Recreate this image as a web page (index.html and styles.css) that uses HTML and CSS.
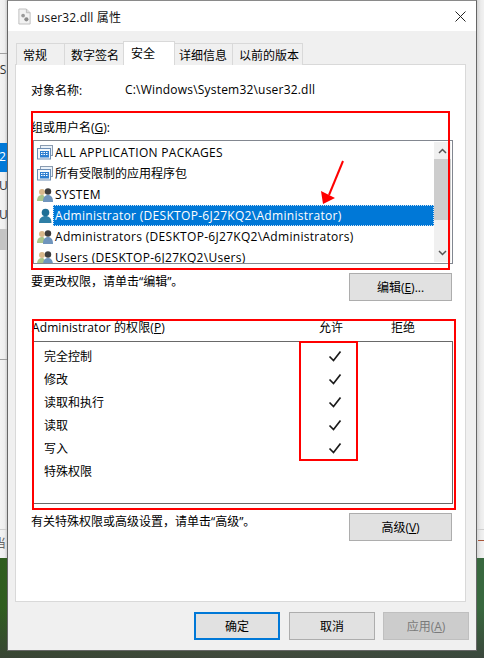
FILE: index.html
```html
<!DOCTYPE html>
<html lang="zh-CN">
<head>
<meta charset="utf-8">
<title>user32.dll 属性</title>
<link rel="stylesheet" href="styles.css">
</head>
<body>
<div class="desktop">
  <div class="behind-left">
    <span class="peek p1">ES</span><span class="peek p2 sel">2</span><span class="peek p3">U</span><span class="peek p4">U</span><span class="peek p5">当</span>
    <div class="hl"></div><div class="ln l1"></div><div class="ln l2"></div><div class="ln l3"></div>
  </div>
  <div class="behind-right"><div class="ln l3"></div><div class="dash"></div></div>
  <div class="wallpaper"></div>
  <div class="window">
    <div class="titlebar">
      <svg class="file-icon" viewBox="0 0 16 18"><path d="M2 1h8l4 4v12H2z" fill="#f2f2f2" stroke="#bdbdbd"/><path d="M10 1v4h4" fill="#ddd" stroke="#bdbdbd"/><circle cx="6.500" cy="8" r="2" fill="#9a9a9a"/><circle cx="10" cy="12" r="2.200" fill="#8c8c8c"/></svg>
      <span class="title">user32.dll 属性</span>
      <svg class="close" viewBox="0 0 11 11"><path d="M.5.5l10 10M10.500.5l-10 10" stroke="#222" fill="none"/></svg>
    </div>
    <div class="client">
      <div class="tabs">
        <div class="tab t1">常规</div>
        <div class="tab t2">数字签名</div>
        <div class="tab t3 active">安全</div>
        <div class="tab t4">详细信息</div>
        <div class="tab t5">以前的版本</div>
      </div>
      <div class="panel">
        <div class="objname"><span class="objlabel">对象名称:</span><span class="path">C:\Windows\System32\user32.dll</span></div>
        <div class="grouplabel">组或用户名(<u>G</u>):</div>
        <div class="listbox">
          <div class="rows">
            <div class="row"><svg class="ic"><use href="#pkg"/></svg><span class="rt latin">ALL APPLICATION PACKAGES</span></div>
            <div class="row"><svg class="ic"><use href="#pkg"/></svg><span class="rt">所有受限制的应用程序包</span></div>
            <div class="row"><svg class="ic"><use href="#grp"/></svg><span class="rt latin">SYSTEM</span></div>
            <div class="row selected"><svg class="ic"><use href="#usr"/></svg><span class="rt latin">Administrator (DESKTOP-6J27KQ2\Administrator)</span></div>
            <div class="row"><svg class="ic"><use href="#grp"/></svg><span class="rt latin">Administrators (DESKTOP-6J27KQ2\Administrators)</span></div>
            <div class="row"><svg class="ic"><use href="#grp"/></svg><span class="rt latin">Users (DESKTOP-6J27KQ2\Users)</span></div>
          </div>
          <div class="scrollbar">
            <svg class="arrow" viewBox="0 0 9 6"><path d="M1 5l3.500-3.500L8 5" fill="none" stroke="#555" stroke-width="1.500"/></svg>
            <div class="thumb"></div>
            <div class="track"></div>
            <svg class="arrow" viewBox="0 0 9 6"><path d="M1 1l3.500 3.500L8 1" fill="none" stroke="#555" stroke-width="1.500"/></svg>
          </div>
        </div>
        <div class="action first">
          <span>要更改权限，请单击“编辑”。</span>
          <button class="btn wide">编辑(<u>E</u>)...</button>
        </div>
        <div class="permhead"><span class="phname">Administrator 的权限(<u>P</u>)</span><span class="allow">允许</span><span class="deny">拒绝</span></div>
        <div class="permlist">
          <div class="perm"><span class="pn">完全控制</span><svg class="check"><use href="#chk"/></svg></div>
          <div class="perm"><span class="pn">修改</span><svg class="check"><use href="#chk"/></svg></div>
          <div class="perm"><span class="pn">读取和执行</span><svg class="check"><use href="#chk"/></svg></div>
          <div class="perm"><span class="pn">读取</span><svg class="check"><use href="#chk"/></svg></div>
          <div class="perm"><span class="pn">写入</span><svg class="check"><use href="#chk"/></svg></div>
          <div class="perm"><span class="pn">特殊权限</span></div>
        </div>
        <div class="action second">
          <span>有关特殊权限或高级设置，请单击“高级”。</span>
          <button class="btn wide">高级(<u>V</u>)</button>
        </div>
      </div>
      <div class="footer">
        <button class="btn foot default">确定</button>
        <button class="btn foot">取消</button>
        <button class="btn foot disabled">应用(<u>A</u>)</button>
      </div>
    </div>
  </div>
  <div class="mark m1"></div>
  <div class="mark m2"></div>
  <div class="mark m3"></div>
  <svg class="red-arrow" viewBox="0 0 24 45"><path d="M22 1L8 35" stroke="#f00" stroke-width="2" fill="none"/><path d="M0 31l14 7-12 6z" fill="#f00"/></svg>
</div>
<svg class="defs" width="0" height="0">
  <defs>
    <symbol id="pkg" viewBox="0 0 16 16">
      <rect x="3.500" y=".5" width="12" height="10" fill="#eaf2fa" stroke="#8a9bb0"/>
      <rect x=".5" y="3.500" width="13" height="10.500" fill="#f4f8fc" stroke="#6f8fb5"/>
      <rect x="3" y="6" width="9" height="6.500" fill="#2f7fd0"/>
      <path d="M4 7.500h1.500M6.500 7.500h1.500M9 7.500h1.500M4 9.500h1.500M6.500 9.500h1.500M9 9.500h1.500" stroke="#fff"/>
    </symbol>
    <symbol id="grp" viewBox="0 0 16 16">
      <circle cx="5" cy="5" r="3" fill="#d9b98c"/>
      <path d="M0 14c0-4 2-6 5-6 2 0 3 1 3 6z" fill="#a9c48c"/>
      <circle cx="11" cy="4.500" r="3.200" fill="#3d3d3d"/>
      <path d="M6 15c0-5 2-7 5-7s5 2 5 7z" fill="#6f95bd"/>
    </symbol>
    <symbol id="usr" viewBox="0 0 16 16">
      <circle cx="8.500" cy="4.500" r="3.800" fill="#1f6f96"/>
      <path d="M2 15c0-5 3-7 6.500-7s6 2 6 7z" fill="#2f7fa6"/>
    </symbol>
    <symbol id="chk" viewBox="0 0 14 12">
      <path d="M1.500 6.500l4 4 7-9" fill="none" stroke="#1a1a1a" stroke-width="1.700"/>
    </symbol>
  </defs>
</svg>
</body>
</html>
```
FILE: styles.css
```css
* { box-sizing: border-box; }
html, body { margin: 0; padding: 0; }
body { font-family: "Open Sans", "Noto Sans CJK SC", sans-serif; font-size: 12px; color: #000; }
.desktop { position: relative; width: 484px; height: 658px; overflow: hidden; background: #fff; }
.defs { position: absolute; }
.behind-left { position: absolute; left: 0; top: 0; width: 8px; height: 558px; background: linear-gradient(90deg, #f3f3f3 0, #eeeeee 55%, #c4c4c4 100%); overflow: hidden; }
.behind-right { position: absolute; right: 0; top: 0; width: 8px; height: 558px; background: linear-gradient(90deg, #cfcfcf 0, #ececec 60%, #f2f2f2 100%); }
.peek { position: absolute; left: -1px; color: #333; line-height: 14px; }
.p1 { top: 63px; left: -7px; }
.p2 { top: 143px; padding-top: 7px; }
.sel { background: #0078d7; color: #fff; width: 9px; height: 29px; }
.p3 { top: 179px; }
.p4 { top: 208px; }
.p5 { top: 537px; left: -6px; color: #666; }
.hl { position: absolute; top: 229px; left: 0; width: 8px; height: 21px; background: #c4c4c4; }
.ln { position: absolute; left: 0; right: 0; height: 1px; background: #a0a0a0; }
.l1 { top: 53px; }
.l2 { top: 359px; }
.l3 { top: 529px; background: #cfcfcf; }
.dash { position: absolute; top: 540px; left: 2px; right: 0; height: 1px; background: #a8553a; }
.wallpaper { position: absolute; left: 0; right: 0; top: 558px; bottom: 0; background: linear-gradient(180deg, rgba(60,110,60,0) 50%, rgba(60,60,60,.75) 100%), linear-gradient(90deg, #2f5d1e 0, #4a6a3a 50%, #38683e 100%); }
.behind-left + .behind-right + .wallpaper { z-index: 0; }
.window { position: absolute; z-index: 1; left: 7px; top: 0; width: 470px; height: 651px; background: #f0f0f0; border: 1px solid #666; border-top-color: #8a8a8a; display: flex; flex-direction: column; }
.titlebar { height: 30px; flex: none; background: #fff; display: flex; align-items: center; padding: 0 10px 0 9px; }
.file-icon { width: 15px; height: 17px; flex: none; }
.title { margin-left: 5px; font-size: 12px; flex: 1; color: #111; padding-top: 1px; letter-spacing: .15px; }
.close { width: 11px; height: 11px; flex: none; }
.client { flex: 1; display: flex; flex-direction: column; padding: 0 7px; min-height: 0; }
.tabs { height: 34px; flex: none; display: flex; align-items: flex-end; position: relative; z-index: 1; margin-bottom: -1px; padding-left: 1px; }
.tab { height: 22px; border: 1px solid #d9d9d9; border-bottom: none; margin-right: -1px; background: #f0f0f0; display: flex; align-items: center; color: #000; white-space: nowrap; }
.t1 { width: 49px; padding-left: 6px; }
.t2 { width: 60px; padding-left: 6px; }
.t3 { width: 52px; padding-left: 7px; }
.t4 { width: 59px; padding-left: 4px; }
.t5 { width: 71px; padding-left: 6px; }
.tab.active { height: 24px; background: #fff; position: relative; align-items: flex-start; padding-top: 2px; z-index: 2; }
.panel { width: 451px; height: 538px; flex: none; background: #fff; border: 1px solid #d9d9d9; padding: 0 13px 0 15px; display: flex; flex-direction: column; }
.objname { display: flex; margin-top: 16px; height: 17px; align-items: center; }
.objlabel { width: 94px; flex: none; }
.path { letter-spacing: .2px; }
.grouplabel { margin-top: 21px; height: 17px; line-height: 17px; }
.listbox { margin: 4px 0 0 2px; width: 420px; height: 124px; border: 1px solid #828790; display: flex; background: #fff; overflow: hidden; }
.rows { flex: 1; padding-top: 1px; min-width: 0; overflow: hidden; }
.row { height: 21px; display: flex; align-items: center; padding-left: 3px; white-space: nowrap; }
.ic { width: 16px; height: 16px; flex: none; }
.rt { margin-left: 0; padding: 0 2px; flex: 1; height: 21px; line-height: 21px; }
.latin { letter-spacing: .3px; }
.row.selected .rt { background: #0078d7; color: #fff; outline: 1px dotted #d0e4f5; outline-offset: -1px; }
.scrollbar { width: 17px; flex: none; background: #f0f0f0; display: flex; flex-direction: column; align-items: center; margin: 1px 1px 1px 0; }
.arrow { width: 9px; height: 6px; margin: 6px 0; flex: none; }
.thumb { width: 100%; height: 61px; background: #cdcdcd; margin-top: -1px; flex: none; }
.track { flex: 1; }
.action { display: flex; justify-content: space-between; align-items: flex-start; }
.first { margin-top: 9px; height: 28px; }
.first span { line-height: 18px; }
.second { margin-top: 9px; }
.second span { line-height: 18px; }
.btn { font: inherit; background: #e1e1e1; border: 1px solid #adadad; color: #000; padding: 0; border-radius: 0; display: flex; align-items: center; justify-content: center; }
.wide { width: 103px; height: 28px; }
.permhead { margin-top: 18px; height: 18px; line-height: 18px; display: flex; }
.phname { width: 288px; flex: none; padding-left: 1px; letter-spacing: .1px; }
.allow { width: 72px; flex: none; }
.deny { flex: none; }
.permlist { margin: 4px 0 0 2px; width: 420px; height: 163px; border: 1px solid #696969; padding-top: 2px; }
.perm { height: 23px; display: flex; align-items: center; padding-left: 10px; }
.pn { width: 284px; flex: none; }
.check { width: 14px; height: 12px; flex: none; }
.footer { display: flex; gap: 8px; justify-content: flex-end; padding: 10px 0 0; }
.foot { width: 86px; height: 28px; }
.default { border: 2px solid #0078d7; margin-right: 1px; }
.disabled { background: #ccc; color: #7a7a7a; border-color: #bfbfbf; }
.mark { position: absolute; z-index: 2; border: 2px solid #f00; pointer-events: none; }
.m1 { left: 31px; top: 111px; width: 419px; height: 159px; }
.m2 { left: 32px; top: 319px; width: 424px; height: 191px; }
.m3 { left: 299px; top: 341px; width: 59px; height: 120px; }
.red-arrow { position: absolute; z-index: 2; left: 321px; top: 160px; width: 24px; height: 45px; }
```
